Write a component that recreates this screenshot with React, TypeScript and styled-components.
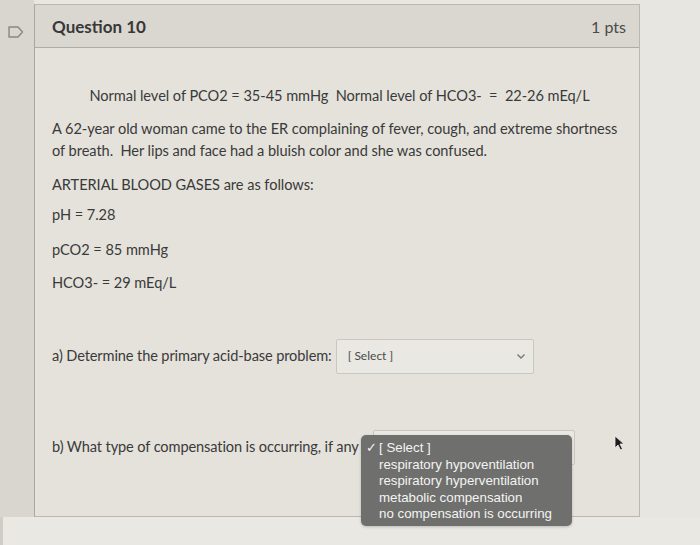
import React from "react";
import styled, { createGlobalStyle } from "styled-components";

const GlobalStyle = createGlobalStyle`
  html, body {
    margin: 0;
    padding: 0;
    background: #e9e8e3;
  }
  body {
    font-family: Lato, "Open Sans", sans-serif;
    color: #3a3a3a;
  }
`;

const Page = styled.div`
  width: 700px;
  height: 545px;
  display: flex;
  flex-direction: column;
  overflow: hidden;
`;
const Main = styled.div`
  display: flex;
  height: 517px;
  background: #e7e6e1;
`;
const Gutter = styled.div`
  width: 34px;
  flex-shrink: 0;
  background: #d8d6cf;
  padding-top: 22px;
  padding-left: 8px;
  box-sizing: border-box;
`;
const Card = styled.div`
  width: 606px;
  height: 513px;
  margin-top: 4px;
  border: 1px solid #b9b7b0;
  border-left-color: #a9a7a0;
  background: #e4e2db;
  display: flex;
  flex-direction: column;
  box-sizing: border-box;
`;
const Header = styled.div`
  height: 42px;
  flex-shrink: 0;
  background: #d9d7cf;
  border-bottom: 1px solid #aeaca5;
  display: flex;
  align-items: center;
  justify-content: space-between;
  padding: 0 13px 0 17px;
  font-size: 17px;
`;
const Title = styled.div`
  font-weight: 700;
  color: #383838;
`;
const Points = styled.div`
  font-size: 16px;
  color: #4a4a4a;
`;
const Body = styled.div`
  padding: 37px 12px 0 17px;
  font-size: 14.6px;
  line-height: 22px;
`;
const Centered = styled.p`
  margin: 0 0 11px;
  text-align: center;
  letter-spacing: -0.05px;
`;
const Para = styled.p<{ gap?: number }>`
  margin: 0 0 ${(p) => p.gap ?? 12}px;
  letter-spacing: -0.05px;
`;
const QuestionRow = styled.div<{ top: number }>`
  position: relative;
  display: flex;
  align-items: center;
  margin-top: ${(p) => p.top}px;
  height: 36px;
  white-space: nowrap;
  letter-spacing: -0.12px;
`;
const SelectBox = styled.div<{ width: number; left: number }>`
  width: ${(p) => p.width}px;
  height: 35px;
  flex-shrink: 0;
  box-sizing: border-box;
  border: 1px solid #c9c7c0;
  background: #e9e8e3;
  border-radius: 2px;
  display: flex;
  align-items: center;
  justify-content: space-between;
  padding: 0 7px 0 11px;
  font-size: 12px;
  letter-spacing: 0;
  color: #4a4a4a;
  margin-left: ${(p) => p.left}px;
`;
const Menu = styled.div`
  position: absolute;
  left: 309px;
  top: 6px;
  width: 211px;
  background: #6f6f6e;
  border-radius: 5px;
  padding: 5px 0 3px;
  box-shadow: 0 1px 3px rgba(0, 0, 0, 0.2);
  font-family: "Liberation Sans", Arial, sans-serif;
  font-size: 13.3px;
  letter-spacing: 0;
  line-height: 16.5px;
  color: #f4f4f2;
`;
const Option = styled.div<{ checked?: boolean }>`
  padding-left: 18px;
  position: relative;
  white-space: nowrap;
  &::before {
    content: ${(p) => (p.checked ? '"✓"' : '""')};
    position: absolute;
    left: 5px;
  }
`;
const Cursor = styled.svg`
  position: absolute;
  left: 562px;
  top: 6px;
`;
const Bottom = styled.div`
  flex: 1;
  display: flex;
`;
const BottomGutter = styled.div`
  width: 3px;
  background: #cfcdc6;
`;
const BottomRest = styled.div`
  flex: 1;
  background: #e9e8e3;
`;

export default function App() {
  return (
    <Page>
      <GlobalStyle />
      <Main>
        <Gutter>
          <svg width="16" height="12" viewBox="0 0 16 12">
            <path
              d="M1 1 H10 L14.5 6 L10 11 H1 Z"
              fill="none"
              stroke="#8a8882"
              strokeWidth="1.4"
              strokeLinejoin="round"
            />
          </svg>
        </Gutter>
        <Card>
          <Header>
            <Title>Question 10</Title>
            <Points>1 pts</Points>
          </Header>
          <Body>
            <Centered>
              Normal level of PCO2 = 35-45 mmHg&nbsp; Normal level of HCO3-&nbsp; =&nbsp; 22-26 mEq/L
            </Centered>
            <Para>
              A 62-year old woman came to the ER complaining of fever, cough, and extreme shortness of
              breath.&nbsp; Her lips and face had a bluish color and she was confused.
            </Para>
            <Para gap={8}>ARTERIAL BLOOD GASES are as follows:</Para>
            <Para gap={13}>pH = 7.28</Para>
            <Para gap={11}>pCO2 = 85 mmHg</Para>
            <Para gap={0}>HCO3- = 29 mEq/L</Para>
            <QuestionRow top={44}>
              a) Determine the primary acid-base problem:
              <SelectBox width={198} left={4}>
                [ Select ]
                <svg width="10" height="7" viewBox="0 0 10 7">
                  <path d="M1.5 1.5 L5 5 L8.5 1.5" fill="none" stroke="#777" strokeWidth="1.4" />
                </svg>
              </SelectBox>
            </QuestionRow>
            <QuestionRow top={55}>
              b) What type of compensation is occurring, if any
              <SelectBox width={202} left={14} />
              <Menu>
                <Option checked>[ Select ]</Option>
                <Option>respiratory hypoventilation</Option>
                <Option>respiratory hyperventilation</Option>
                <Option>metabolic compensation</Option>
                <Option>no compensation is occurring</Option>
              </Menu>
              <Cursor width="12" height="16" viewBox="0 0 12 16">
                <path d="M1 1 L1 13 L4 10 L6.5 15 L8.5 14 L6 9 L10 9 Z" fill="#1c1c1c" stroke="#f0f0f0" strokeWidth="0.8" />
              </Cursor>
            </QuestionRow>
          </Body>
        </Card>
      </Main>
      <Bottom>
        <BottomGutter />
        <BottomRest />
      </Bottom>
    </Page>
  );
}
